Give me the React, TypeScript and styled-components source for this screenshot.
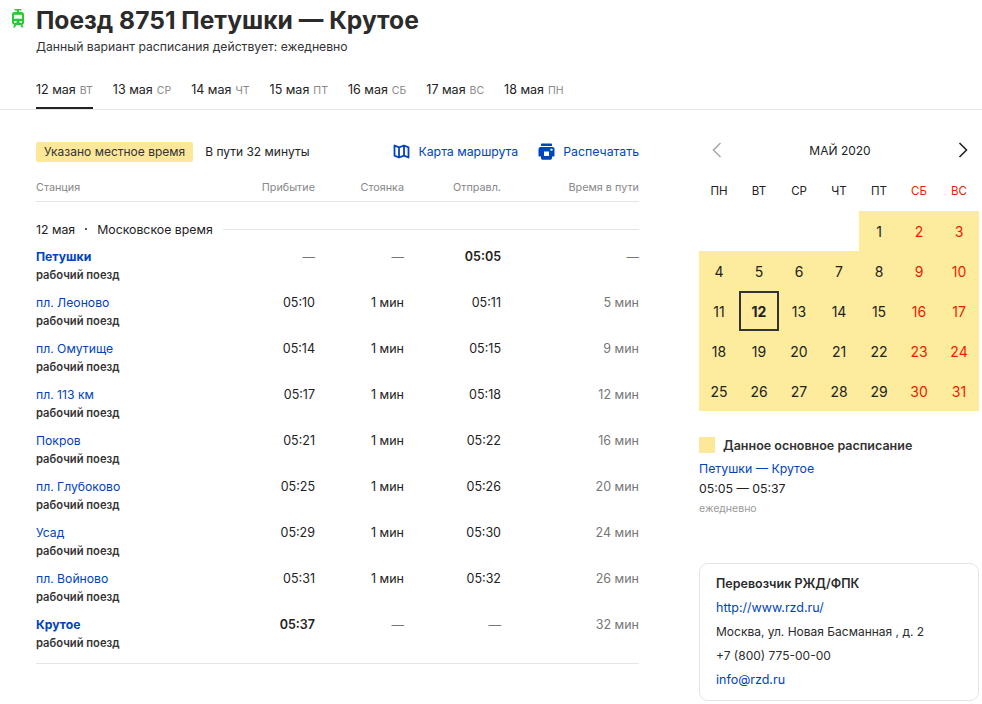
import React from 'react';
import styled, { createGlobalStyle } from 'styled-components';

interface Stop {
  name: string;
  arrive: string;
  wait: string;
  leave: string;
  travel: string;
  main?: boolean;
  boldArrive?: boolean;
  boldLeave?: boolean;
}

const STOPS: Stop[] = [
  { name: 'Петушки', arrive: '—', wait: '—', leave: '05:05', travel: '—', main: true, boldLeave: true },
  { name: 'пл. Леоново', arrive: '05:10', wait: '1 мин', leave: '05:11', travel: '5 мин' },
  { name: 'пл. Омутище', arrive: '05:14', wait: '1 мин', leave: '05:15', travel: '9 мин' },
  { name: 'пл. 113 км', arrive: '05:17', wait: '1 мин', leave: '05:18', travel: '12 мин' },
  { name: 'Покров', arrive: '05:21', wait: '1 мин', leave: '05:22', travel: '16 мин' },
  { name: 'пл. Глубоково', arrive: '05:25', wait: '1 мин', leave: '05:26', travel: '20 мин' },
  { name: 'Усад', arrive: '05:29', wait: '1 мин', leave: '05:30', travel: '24 мин' },
  { name: 'пл. Войново', arrive: '05:31', wait: '1 мин', leave: '05:32', travel: '26 мин' },
  { name: 'Крутое', arrive: '05:37', wait: '—', leave: '—', travel: '32 мин', main: true, boldArrive: true },
];

const TABS = [
  ['12 мая', 'ВТ'],
  ['13 мая', 'СР'],
  ['14 мая', 'ЧТ'],
  ['15 мая', 'ПТ'],
  ['16 мая', 'СБ'],
  ['17 мая', 'ВС'],
  ['18 мая', 'ПН'],
];

const WEEK = ['ПН', 'ВТ', 'СР', 'ЧТ', 'ПТ', 'СБ', 'ВС'];

const GlobalStyle = createGlobalStyle`
  html, body {
    margin: 0;
    padding: 0;
    background: #fff;
  }
  body {
    font-family: "Inter", "Roboto", "Liberation Sans", sans-serif;
    font-size: 13px;
    color: #222;
    overflow: hidden;
  }
  a {
    color: #0044bb;
    text-decoration: none;
  }
`;

const Page = styled.div`
  width: 982px;
  height: 704px;
  overflow: hidden;
`;

const Header = styled.header`
  display: flex;
  padding: 5px 0 0 11px;
  height: 65px;
  box-sizing: border-box;
`;

const TrainIcon = styled.svg`
  width: 14px;
  height: 19px;
  margin: 4px 11px 0 0;
  flex: none;
`;

const Title = styled.h1`
  margin: 0;
  font-size: 24.6px;
  line-height: 30px;
  font-weight: 700;
  color: #2b2b2b;
`;

const Subtitle = styled.div`
  margin-top: 4px;
  font-size: 12.2px;
  line-height: 16px;
  color: #333;
`;

const Tabs = styled.nav`
  display: flex;
  gap: 20px;
  height: 44px;
  padding-left: 36px;
  border-bottom: 1px solid #e5e5e5;
`;

const Tab = styled.div<{ $active?: boolean }>`
  display: flex;
  align-items: baseline;
  gap: 4px;
  height: 44px;
  box-sizing: border-box;
  padding-top: 17px;
  line-height: 16px;
  font-size: 12.5px;
  color: #222;
  border-bottom: 2px solid ${p => (p.$active ? '#222' : 'transparent')};
`;

const TabDay = styled.span`
  font-size: 10.5px;
  color: #888;
`;

const Main = styled.main`
  display: flex;
  gap: 60px;
  padding: 31px 0 0 36px;
`;

const Left = styled.section`
  width: 603px;
`;

const Toolbar = styled.div`
  display: flex;
  align-items: center;
  height: 21px;
`;

const Notice = styled.div`
  background: #fde89a;
  border-radius: 2px;
  padding: 0 8px;
  height: 20px;
  line-height: 20px;
  font-size: 12px;
  color: #333;
`;

const Duration = styled.div`
  margin-left: 12px;
  font-size: 12px;
  color: #222;
  flex: 1;
`;

const ToolLink = styled.a`
  display: flex;
  align-items: center;
  gap: 8px;
  margin-left: 20px;
  font-size: 12.3px;
  color: #0044bb;
`;

const ToolIcon = styled.svg`
  width: 17px;
  height: 17px;
  flex: none;
`;

const Row = styled.div`
  display: grid;
  grid-template-columns: 199px 80px 89px 97px 138px;
`;

const HeadRow = styled(Row)`
  margin-top: 18px;
  height: 21px;
  line-height: 16px;
  font-size: 10.8px;
  color: #888;
  border-bottom: 1px solid #e5e5e5;
`;

const Cell = styled.div<{ $bold?: boolean; $muted?: boolean }>`
  text-align: right;
  font-size: 12.5px;
  line-height: 16px;
  font-weight: ${p => (p.$bold ? 600 : 400)};
  color: ${p => (p.$muted ? '#777' : '#222')};
`;

const HeadCell = styled.div<{ $left?: boolean }>`
  text-align: ${p => (p.$left ? 'left' : 'right')};
`;

const DateLine = styled.div`
  display: flex;
  align-items: center;
  height: 16px;
  margin-top: 19px;
  font-size: 12.3px;
  color: #222;
  &::after {
    content: '';
    flex: 1;
    height: 1px;
    background: #e5e5e5;
    margin-left: 10px;
  }
`;

const Dot = styled.span`
  width: 2px;
  height: 2px;
  border-radius: 50%;
  background: #222;
  margin: 0 10px;
`;

const Rows = styled.div`
  margin-top: 10px;
  padding-bottom: 2px;
  border-bottom: 1px solid #e5e5e5;
`;

const StopRow = styled(Row)`
  height: 46px;
  padding-top: 2px;
  box-sizing: border-box;
`;

const StopName = styled.a<{ $main?: boolean }>`
  display: block;
  font-size: 12.2px;
  line-height: 16px;
  font-weight: ${p => (p.$main ? 700 : 400)};
`;

const TrainKind = styled.div`
  margin-top: 3px;
  font-size: 11.2px;
  line-height: 14px;
  font-weight: 600;
  color: #333;
`;

const Right = styled.aside`
  width: 280px;
`;

const CalendarHead = styled.div`
  display: flex;
  align-items: center;
  justify-content: space-between;
  height: 20px;
  margin-top: -1px;
  padding: 0 10px 0 12px;
  font-size: 12px;
  color: #222;
`;

const Chevron = styled.svg`
  width: 12px;
  height: 18px;
`;

const CalGrid = styled.div`
  display: grid;
  grid-template-columns: repeat(7, 40px);
  grid-auto-rows: 40px;
  margin-top: 11px;
`;

const WeekDay = styled.div<{ $red?: boolean }>`
  display: flex;
  align-items: center;
  justify-content: center;
  font-size: 11.5px;
  color: ${p => (p.$red ? '#ee1d00' : '#222')};
`;

const Day = styled.div<{ $red?: boolean; $today?: boolean; $empty?: boolean }>`
  display: flex;
  align-items: center;
  justify-content: center;
  box-sizing: border-box;
  font-size: 14px;
  background: ${p => (p.$empty ? 'transparent' : '#fdeb9e')};
  color: ${p => (p.$red ? '#ee1d00' : '#222')};
  font-weight: ${p => (p.$today ? 700 : 400)};
  border: ${p => (p.$today ? '2px solid #333' : 'none')};
`;

const Legend = styled.div`
  display: flex;
  align-items: center;
  gap: 8px;
  margin-top: 26px;
  height: 16px;
  font-size: 12.5px;
  font-weight: 600;
  color: #333;
`;

const Swatch = styled.span`
  width: 16px;
  height: 16px;
  background: #fde89a;
`;

const LegendLink = styled.a`
  display: block;
  margin-top: 8px;
  font-size: 12.3px;
  line-height: 16px;
`;

const LegendTime = styled.div`
  margin-top: 4px;
  font-size: 12.3px;
  line-height: 16px;
`;

const LegendNote = styled.div`
  margin-top: 5px;
  font-size: 10.5px;
  line-height: 14px;
  color: #999;
`;

const Carrier = styled.div`
  margin-top: 47px;
  height: 138px;
  box-sizing: border-box;
  padding: 8px 16px 0;
  border: 1px solid #e5e5e5;
  border-radius: 9px;
`;

const CarrierLine = styled.div<{ $bold?: boolean }>`
  height: 24px;
  line-height: 24px;
  font-size: 12px;
  font-weight: ${p => (p.$bold ? 600 : 400)};
  color: #2b2b2b;
`;

const CarrierHead = styled(CarrierLine)`
  font-size: 12.5px;
`;

const CarrierLink = styled.a`
  font-size: 12.5px;
`;

// 1 мая 2020 — пятница, значит красные числа это 2, 3, 9, 10 и так далее
const isWeekend = (d: number) => d % 7 === 2 || d % 7 === 3;

const App: React.FC = () => {
  const days = Array.from({ length: 31 }, (_, i) => i + 1);

  return (
    <Page>
      <GlobalStyle />
      <Header>
        <TrainIcon viewBox="0 0 14 19">
          <path fill="#22cc33" d="M3.500 0h7v1.500H8v1.500h2.500c1.500 0 2.500 1 2.500 2.500v8c0 1.200-.8 2-1.800 2.300l1.300 2.700h-2l-1.200-2.500H5.200L4 18.500H2l1.300-2.700C2.300 15.500 1 14.700 1 13.500v-8C1 4 2 3 3.500 3H6V1.500H3.500z" />
          <path fill="#fff" d="M3 5.800h8v3.900H3z" />
          <path fill="#fff" d="M3 12h2.500v1.800H3zM8.500 12H11v1.800H8.500z" />
        </TrainIcon>
        <div>
          <Title>Поезд 8751 Петушки — Крутое</Title>
          <Subtitle>Данный вариант расписания действует: ежедневно</Subtitle>
        </div>
      </Header>

      <Tabs>
        {TABS.map(([date, day], i) => (
          <Tab key={date} $active={i === 0}>
            {date} <TabDay>{day}</TabDay>
          </Tab>
        ))}
      </Tabs>

      <Main>
        <Left>
          <Toolbar>
            <Notice>Указано местное время</Notice>
            <Duration>В пути 32 минуты</Duration>
            <ToolLink>
              <ToolIcon viewBox="0 0 17 17">
                <path fill="none" stroke="#0044bb" strokeWidth="1.800" strokeLinejoin="round" d="M1.500 2.500l4.500 1.800 5-1.800 4.500 1.800v10.200L11 12.700l-5 1.800-4.500-1.800zM6 4.300v10.200M11 2.500v10.200" />
              </ToolIcon>
              Карта маршрута
            </ToolLink>
            <ToolLink>
              <ToolIcon viewBox="0 0 17 17">
                <path fill="#0044bb" d="M4 0.500h9c.6 0 1 .4 1 1V3H3V1.500c0-.6.4-1 1-1zM2.500 4h12c1 0 2 .8 2 2v6.500c0 .6-.4 1-1 1H14V15c0 1-.8 1.800-1.800 1.800H4.800C3.800 16.800 3 16 3 15v-1.500H1.500c-.6 0-1-.4-1-1V6c0-1.200 1-2 2-2z" />
                <path fill="#fff" d="M6 8.500h5v4.500H6zM12.500 5.800h2v2h-2z" />
              </ToolIcon>
              Распечатать
            </ToolLink>
          </Toolbar>

          <HeadRow>
            <HeadCell $left>Станция</HeadCell>
            <HeadCell>Прибытие</HeadCell>
            <HeadCell>Стоянка</HeadCell>
            <HeadCell>Отправл.</HeadCell>
            <HeadCell>Время в пути</HeadCell>
          </HeadRow>

          <DateLine>
            12 мая<Dot />Московское время
          </DateLine>

          <Rows>
            {STOPS.map(stop => (
              <StopRow key={stop.name}>
                <div>
                  <StopName $main={stop.main}>{stop.name}</StopName>
                  <TrainKind>рабочий поезд</TrainKind>
                </div>
                <Cell $bold={stop.boldArrive} $muted={stop.arrive === '—'}>{stop.arrive}</Cell>
                <Cell $muted={stop.wait === '—'}>{stop.wait}</Cell>
                <Cell $bold={stop.boldLeave} $muted={stop.leave === '—'}>{stop.leave}</Cell>
                <Cell $muted>{stop.travel}</Cell>
              </StopRow>
            ))}
          </Rows>
        </Left>

        <Right>
          <CalendarHead>
            <Chevron viewBox="0 0 12 18">
              <path fill="none" stroke="#aaa" strokeWidth="1.600" d="M9.500 2L2.500 9l7 7" />
            </Chevron>
            МАЙ 2020
            <Chevron viewBox="0 0 12 18">
              <path fill="none" stroke="#222" strokeWidth="1.600" d="M2.500 2l7 7-7 7" />
            </Chevron>
          </CalendarHead>

          <CalGrid>
            {WEEK.map((w, i) => (
              <WeekDay key={w} $red={i > 4}>{w}</WeekDay>
            ))}
            {[0, 1, 2, 3].map(n => (
              <Day key={n} $empty />
            ))}
            {days.map(d => (
              <Day key={d} $red={isWeekend(d)} $today={d === 12}>{d}</Day>
            ))}
          </CalGrid>

          <Legend>
            <Swatch />
            Данное основное расписание
          </Legend>
          <LegendLink href="#">Петушки — Крутое</LegendLink>
          <LegendTime>05:05 — 05:37</LegendTime>
          <LegendNote>ежедневно</LegendNote>

          <Carrier>
            <CarrierHead $bold>Перевозчик РЖД/ФПК</CarrierHead>
            <CarrierLine><CarrierLink href="#">http://www.rzd.ru/</CarrierLink></CarrierLine>
            <CarrierLine>Москва, ул. Новая Басманная , д. 2</CarrierLine>
            <CarrierLine>+7 (800) 775-00-00</CarrierLine>
            <CarrierLine><CarrierLink href="#">info@rzd.ru</CarrierLink></CarrierLine>
          </Carrier>
        </Right>
      </Main>
    </Page>
  );
};

export default App;
